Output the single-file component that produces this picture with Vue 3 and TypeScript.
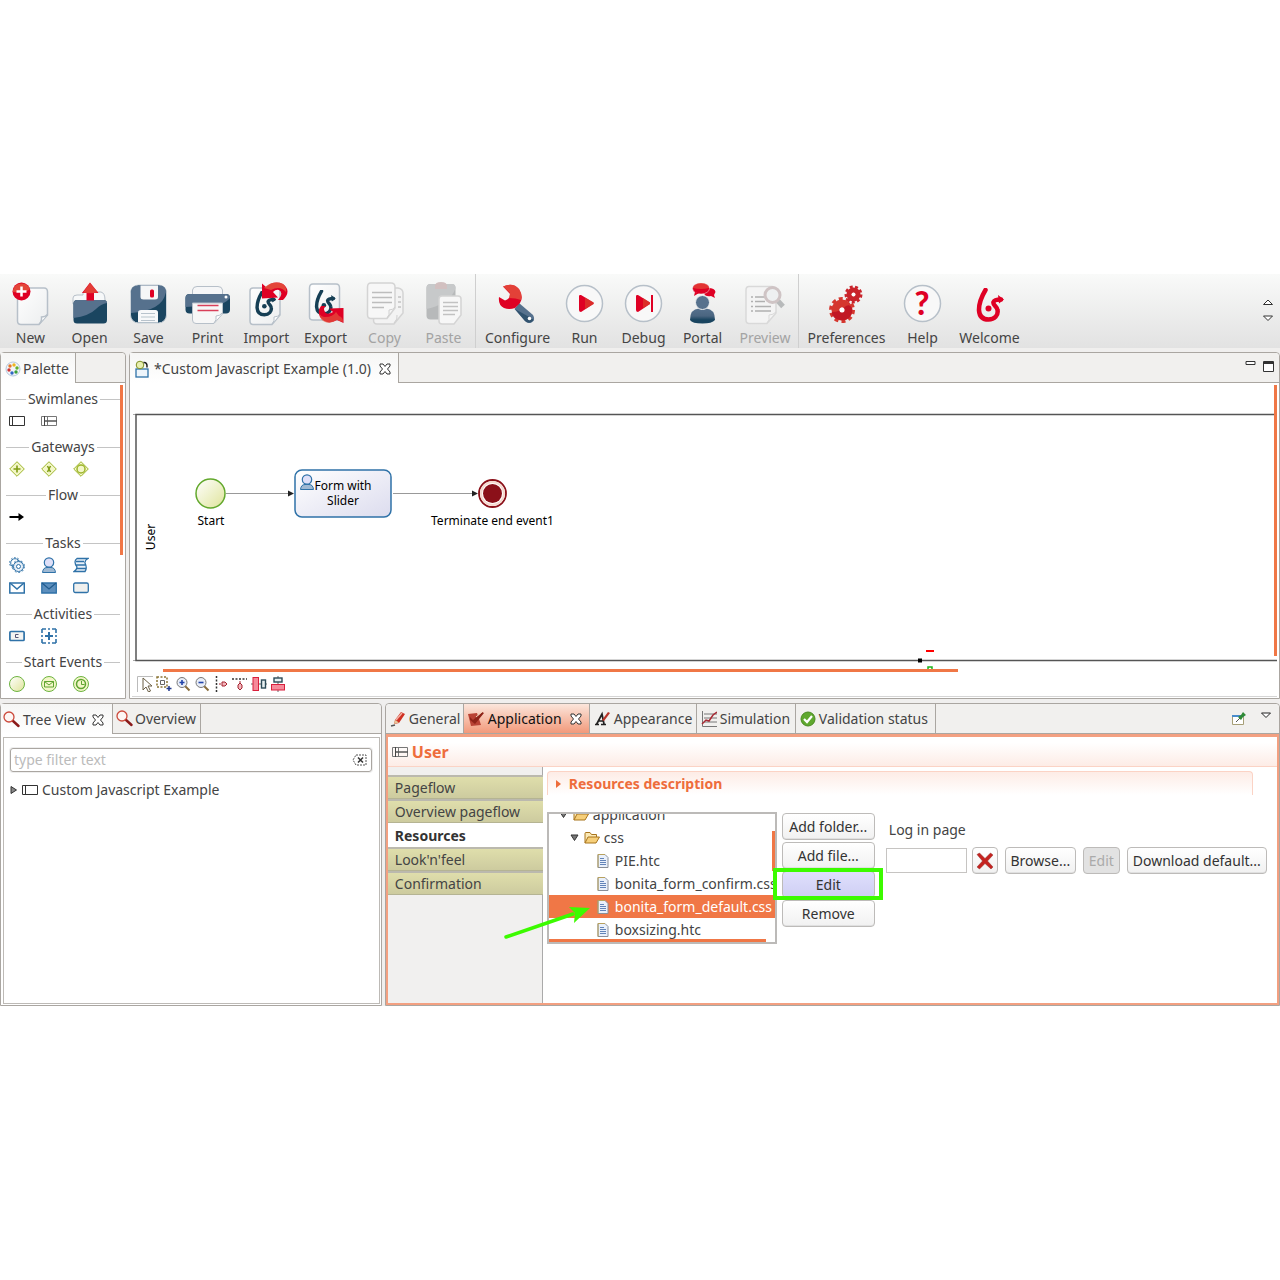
<script setup lang="ts">
import { ref } from 'vue'

interface Tool { id: string; label: string; size?: string; disabled?: boolean }
interface Category { title: string; rows: string[][] }
interface FileRow { name: string; kind: 'folder' | 'file'; level: number }

const toolGroups: Tool[][] = [
  [
    { id: 'new', label: 'New' },
    { id: 'open', label: 'Open' },
    { id: 'save', label: 'Save' },
    { id: 'print', label: 'Print' },
    { id: 'import', label: 'Import' },
    { id: 'export', label: 'Export' },
    { id: 'copy', label: 'Copy', disabled: true },
    { id: 'paste', label: 'Paste', disabled: true },
  ],
  [
    { id: 'configure', label: 'Configure', size: 'wide' },
    { id: 'run', label: 'Run' },
    { id: 'debug', label: 'Debug' },
    { id: 'portal', label: 'Portal' },
    { id: 'preview', label: 'Preview', size: 'medium', disabled: true },
  ],
  [
    { id: 'preferences', label: 'Preferences', size: 'widest' },
    { id: 'help', label: 'Help' },
    { id: 'welcome', label: 'Welcome', size: 'wide' },
  ],
]

const categories: Category[] = [
  { title: 'Swimlanes', rows: [['pool', 'lane']] },
  { title: 'Gateways', rows: [['gate-and', 'gate-xor', 'gate-or']] },
  { title: 'Flow', rows: [['flow']] },
  { title: 'Tasks', rows: [['service', 'human', 'script'], ['receive', 'send', 'abstract']] },
  { title: 'Activities', rows: [['call', 'subprocess']] },
  { title: 'Start Events', rows: [['start', 'start-msg', 'start-timer']] },
]

const canvasTools = ['cursor', 'marquee', 'zoom-in', 'zoom-out', 'space-h', 'space-v', 'align-h', 'align-v']

const pages = ['Pageflow', 'Overview pageflow', 'Resources', "Look'n'feel", 'Confirmation']
const activePage = ref('Resources')

const files: FileRow[] = [
  { name: 'application', kind: 'folder', level: 0 },
  { name: 'css', kind: 'folder', level: 1 },
  { name: 'PIE.htc', kind: 'file', level: 2 },
  { name: 'bonita_form_confirm.css', kind: 'file', level: 2 },
  { name: 'bonita_form_default.css', kind: 'file', level: 2 },
  { name: 'boxsizing.htc', kind: 'file', level: 2 },
]
const selectedFile = ref('bonita_form_default.css')

const filter = ref('')
const loginPage = ref('')
</script>

<template>
  <svg class="sprite" aria-hidden="true">
    <defs>
      <linearGradient id="g-paper" x1="0" y1="0" x2="1" y2="1">
        <stop offset="0" stop-color="#ffffff" /><stop offset="1" stop-color="#eceeef" />
      </linearGradient>
      <linearGradient id="g-navy" x1="0" y1="0" x2="0" y2="1">
        <stop offset="0" stop-color="#56718d" /><stop offset="0.5" stop-color="#4a6580" /><stop offset="0.75" stop-color="#1a4560" />
      </linearGradient>
      <linearGradient id="g-green" x1="0" y1="0" x2="1" y2="1">
        <stop offset="0" stop-color="#ffffff" /><stop offset="1" stop-color="#dfe49a" />
      </linearGradient>
      <linearGradient id="g-task" x1="0" y1="0" x2="1" y2="1">
        <stop offset="0" stop-color="#ffffff" /><stop offset="1" stop-color="#dcdcee" />
      </linearGradient>

      <symbol id="swirl" viewBox="0 0 28 34">
        <path d="M9.500 1.500C5 9 2.800 16 3 22C3.500 28.500 7 31 12.500 31C18.500 31 22.500 27 21.500 21.500C21 18 16.500 16.500 17.500 13.500C18.500 11 22 11 25 11" fill="none" stroke="currentColor" stroke-width="4.500" stroke-linecap="round" />
        <path d="M22 6.500l6 4.500-5 4z" fill="currentColor" /><circle cx="12.500" cy="20" r="3" fill="currentColor" />
      </symbol>

      <symbol id="t-new" viewBox="0 0 48 48">
        <path d="M15 8H38Q41.500 8 41.500 12V35L33 44.500H15Q11.500 44.500 11.500 41V12Q11.500 8 15 8Z" fill="url(#g-paper)" stroke="#b7c0c9" stroke-width="1.500" />
        <path d="M33 44q3-2 2.500-7q4 0 6-2.500" fill="#fff" stroke="#b7c0c9" stroke-width="1.500" />
        <circle cx="15.500" cy="11.500" r="9" fill="#df0024" /><path d="M7 10a9 9 0 0 1 17-1q-4 4-17 3z" fill="#e4573f" opacity=".8" />
        <path d="M10.500 11.500h10M15.500 6.500v10" stroke="#fff" stroke-width="2.500" />
      </symbol>
      <symbol id="t-open" viewBox="0 0 48 48">
        <path d="M8 24V18Q8 15 12 15H18V12H36Q40 13 40 20V24Z" fill="#f6f8f9" stroke="#b7c0c9" />
        <rect x="8.500" y="20" width="33.500" height="23.500" rx="3.500" fill="#1a4560" />
        <path d="M8.500 38V23.500Q8.500 20 12 20H38.500Q42 20 42 23Q36 24 31 29Q24 36 8.500 38Z" fill="#56718d" />
        <path d="M25 2.500L33.500 13H29V20.500H21.500V13H17Z" fill="#df0024" /><path d="M25 3L33 12.500Q25 14 18 12.500Z" fill="#e4573f" opacity=".7" />
      </symbol>
      <symbol id="t-save" viewBox="0 0 48 48">
        <rect x="6.500" y="5" width="36" height="38" rx="8" fill="#1a4560" stroke="#c9d1d8" />
        <path d="M7 33V12Q7 5.500 14 5.500H36Q42 6 42 12Q40 22 31 27Q22 32 7 33Z" fill="#56718d" />
        <path d="M16.500 5.500H34V17Q34 19.500 31 19.500H19.500Q16.500 19.500 16.500 17Z" fill="#f5f6f7" /><rect x="26" y="9.500" width="4" height="8" rx="1.500" fill="#df0024" />
        <path d="M14 42.500V32.500Q14 30 17 30H31.500Q34 30 34 32.500V42.500Z" fill="#f7f8f9" /><path d="M17 33.500h14M17 37h14M17 40.500h14" stroke="#b8c3cc" stroke-width="1.200" />
      </symbol>
      <symbol id="t-print" viewBox="0 0 48 48">
        <path d="M9.500 17V10Q10 6.500 14 6.500H35Q39 6.500 39.500 10V17Z" fill="#f5f6f7" stroke="#b7c0c9" />
        <rect x="2.500" y="14" width="44.500" height="19.500" rx="4" fill="#1a4560" /><path d="M2.500 27V18Q2.500 14 7 14H43Q47 14 47 18Q42 24 33 25Z" fill="#56718d" />
        <circle cx="43" cy="17" r="1.500" fill="#fff" />
        <path d="M9.500 23H39.500V34L31 43.500H13Q9.500 43.500 9.500 40Z" fill="#f7f7f7" stroke="#b7c0c9" /><path d="M31 43q3-3 2-7q4 0 6-3" fill="#fff" stroke="#b7c0c9" />
        <path d="M14.500 25.500h21M14.500 30.500h21" stroke="#d9405a" stroke-width="1.500" />
      </symbol>
      <symbol id="t-import" viewBox="0 0 48 48">
        <path d="M11 8H35Q38 8 38 11V35L30 44.500H11Q8 44.500 8 41V11Q8 8 11 8Z" fill="url(#g-paper)" stroke="#b7c0c9" stroke-width="1.500" />
        <path d="M30 44q3-3 2-7q4 0 6-3" fill="#fff" stroke="#b7c0c9" /><use href="#swirl" x="12" y="11" width="23" height="26" color="#163f55" />
        <path d="M20 3.500L24 7Q32 0 41 4Q50 11 41 20H36Q42 13 37 10Q34 9 31 12L36 17.500L20 18.500Z" fill="#df0024" /><path d="M23 7Q32 0 41 4Q45 7 44 12Q38 5 29 10L22 8Z" fill="#e4573f" opacity=".8" />
      </symbol>
      <symbol id="t-export" viewBox="0 0 48 48">
        <path d="M12 4H35Q38.500 4 38.500 8V40H12Q8.500 40 8.500 37V8Q8.500 4 12 4Z" fill="url(#g-paper)" stroke="#b7c0c9" stroke-width="1.500" />
        <use href="#swirl" x="13" y="10" width="22" height="26" color="#163f55" />
        <path d="M20 26Q16 31 19 37Q26 46 36 40L42.500 43V28L28 28.500L32 32Q25 36 23.500 31Q22 28 25 26Z" fill="#df0024" /><path d="M18 33Q20 37 24 37Q32 37 35 32L38 36Q42 37 42 42L36 40Q26 46 20 39Z" fill="#e4573f" opacity=".65" />
      </symbol>
      <symbol id="t-copy" viewBox="0 0 48 48">
        <path d="M17 8H38Q43 9 43 13V33L34 44H17Q13.500 44 13.500 40Z" fill="#f3f3f3" stroke="#d4d4d4" stroke-width="1.500" /><path d="M38 17h3M38 22h3M38 27h3" stroke="#aaa" />
        <path d="M11 3H31Q35 3 35 7V28L27 38.500H11Q7.500 38.500 7.500 35V7Q7.500 3 11 3Z" fill="#f7f7f7" stroke="#d4d4d4" stroke-width="1.500" />
        <path d="M27 38q3-3 2-8q4 0 6-3M34 43q4-4 3-8" fill="none" stroke="#d0d0d0" /><path d="M12 12.500h20M12 17.500h20M12 22.500h20M12 27.500h12" stroke="#bdbdbd" stroke-width="1.500" />
      </symbol>
      <symbol id="t-paste" viewBox="0 0 48 48">
        <rect x="7.500" y="4" width="29" height="35.500" rx="4" fill="#b7b9ba" /><path d="M7.500 29V8Q7.500 4 12 4H33Q36.500 4 36.500 8Q34 17 25 22Q18 27 7.500 29Z" fill="#c7c9ca" />
        <path d="M16 9V6Q16 2 22 2Q28 2 28 6V9Z" fill="#d2c0c0" />
        <path d="M23 16H39Q42 16 42 19V35L35 44H23Q20 44 20 41V19Q20 16 23 16Z" fill="#f7f7f7" stroke="#d4d4d4" stroke-width="1.500" /><path d="M24 22.500h15M24 26.500h15M24 30.500h15M24 34.500h12" stroke="#c2c2c2" stroke-width="1.500" />
      </symbol>
      <symbol id="t-configure" viewBox="0 0 48 48">
        <path d="M26 23L40 35Q43 40 38.500 42.500Q35 44 32 41L21.500 29Z" fill="#56718d" /><path d="M22 29L38 38L41 40Q36 45 32 41Z" fill="#31536f" />
        <circle cx="36.500" cy="38.500" r="1.800" fill="#fff" />
        <path d="M10 6.500Q20 2 26 9Q31 17 27 23L22 28Q16 30 11 28Q5 25 6 17L12 20.500Q17 19 17 14Z" fill="#df0024" /><path d="M10 6.500Q20 2 26 9Q30 15 28 20Q23 18 16 18Q17 15 17 13Z" fill="#e4573f" opacity=".75" />
      </symbol>
      <symbol id="t-run" viewBox="0 0 48 48">
        <circle cx="24.500" cy="23.500" r="18" fill="#f8f8f8" stroke="#b7c0c9" stroke-width="1.500" />
        <path d="M19 16Q19 14.500 21 15L33.500 22.500Q34 23.500 33.500 24L21 32Q19 32 19 30Z" fill="#df0024" /><path d="M25 17.500L33.500 22.500V24L25 29Z" fill="#d9402c" opacity=".7" />
      </symbol>
      <symbol id="t-debug" viewBox="0 0 48 48">
        <circle cx="24.500" cy="23.500" r="18" fill="#f8f8f8" stroke="#b7c0c9" stroke-width="1.500" />
        <path d="M17 16Q17 14.500 19 15L31 22.500V24L19 32Q17 32 17 30Z" fill="#df0024" /><path d="M24 18L31 22.500V24L24 28Z" fill="#d9402c" opacity=".7" /><path d="M33 15v17" stroke="#df0024" stroke-width="2" />
      </symbol>
      <symbol id="t-portal" viewBox="0 0 48 48">
        <path d="M12 40Q12 29 21 28.500H28Q37 29 37 40Q34 43.500 24.500 43.500Q14 43.500 12 40Z" fill="url(#g-navy)" /><circle cx="24.500" cy="22.500" r="7" fill="#56718d" stroke="#eef0f1" />
        <path d="M30 8Q37 8 37.500 12L36 15L37 18L33 16Q27 17 26 13Z" fill="#df0024" />
        <ellipse cx="23" cy="8.500" rx="8.500" ry="5.500" fill="#df0024" stroke="#f1f2f2" stroke-width=".500" /><path d="M17 12l-1 4l5-3z" fill="#df0024" /><path d="M15 8Q17 3 23 3Q30 3 31 8Q23 10 15 8Z" fill="#e4573f" opacity=".6" />
      </symbol>
      <symbol id="t-preview" viewBox="0 0 48 48">
        <path d="M9 6.500H32Q36 7 36 10V33L27 43.500H9Q6 43.500 6 40V10Q6 6.500 9 6.500Z" fill="#f4f4f4" stroke="#d9d9d9" stroke-width="1.500" /><path d="M27 43q3-3 2-8q4 0 7-3" fill="none" stroke="#d9d9d9" />
        <path d="M11 17h2M11 21.500h2M11 26.500h2M11 31h2M15 17h9M15 21.500h10M15 26.500h16M15 31h16" stroke="#b0b0b0" stroke-width="1.500" />
        <path d="M38 21L43 26.500" stroke="#b8babb" stroke-width="5" /><circle cx="32.500" cy="15" r="7.500" fill="#eef0f1" stroke="#cfc4c5" stroke-width="3" />
      </symbol>
      <symbol id="t-preferences" viewBox="0 0 48 48">
        <g fill="none" stroke="#d5372f"><circle cx="20" cy="30" r="6.500" stroke-width="8" /><circle cx="20" cy="30" r="11.500" stroke-width="3" stroke-dasharray="4 3.225" /></g>
        <path d="M10 32Q18 32 24 26Q28 24 30 28Q31 33 28 37Q24 41 18 40Q11 39 10 34Z" fill="#b90d22" opacity=".75" /><circle cx="20" cy="30" r="2.500" fill="#fff" />
        <g fill="none" stroke="#c9232b"><circle cx="31.500" cy="14.500" r="4.500" stroke-width="5" /><circle cx="31.500" cy="14.500" r="7.700" stroke-width="2.500" stroke-dasharray="3 2.375" /></g><circle cx="31.500" cy="14.500" r="1.800" fill="#fff" />
      </symbol>
      <symbol id="t-help" viewBox="0 0 48 48">
        <circle cx="24.500" cy="23.500" r="18" fill="#f8f8f8" stroke="#b7c0c9" stroke-width="1.500" />
        <text x="24" y="35" text-anchor="middle" font-family="Lato, 'Open Sans', sans-serif" font-weight="900" font-size="32" fill="#df0024">?</text>
      </symbol>
      <symbol id="t-welcome" viewBox="0 0 48 48"><use href="#swirl" x="11" y="8" width="28" height="35" color="#df0024" /></symbol>

      <symbol id="p-pool" viewBox="0 0 16 16"><path d="M.500 3.500h15v9h-15zM3.500 3.500v9" fill="none" stroke="#333" /></symbol>
      <symbol id="p-lane" viewBox="0 0 16 16"><path d="M.500 3.500h15v9h-15zM3.500 3v10M6.500 3v10M4 8h12" fill="none" stroke="#777" /><path d="M3.500 3v10M4 8h12" stroke="#444" /></symbol>
      <symbol id="p-gate-and" viewBox="0 0 16 16"><path d="M8 .700L15.300 8L8 15.300L.700 8Z" fill="#f3f6c8" stroke="#9db52b" /><path d="M8 4.500v7M4.500 8h7" stroke="#7f9c14" stroke-width="1.600" /></symbol>
      <symbol id="p-gate-xor" viewBox="0 0 16 16"><path d="M8 .700L15.300 8L8 15.300L.700 8Z" fill="#f3f6c8" stroke="#9db52b" /><path d="M6.500 5l3 6M9.500 5l-3 6" stroke="#7f9c14" stroke-width="1.500" /></symbol>
      <symbol id="p-gate-or" viewBox="0 0 16 16"><path d="M8 .700L15.300 8L8 15.300L.700 8Z" fill="#f3f6c8" stroke="#9db52b" /><circle cx="8" cy="8" r="4" fill="none" stroke="#9db52b" stroke-width="1.500" /></symbol>
      <symbol id="p-flow" viewBox="0 0 16 16"><path d="M.500 8h11" stroke="#000" stroke-width="2" /><path d="M9.500 4L15 8L9.500 12Z" fill="#000" /></symbol>
      <symbol id="p-service" viewBox="0 0 16 16"><g fill="none" stroke="#2f72a8"><circle cx="6" cy="6" r="4.300" /><circle cx="6" cy="6" r="5.400" stroke-dasharray="1.700 1.700" /></g><circle cx="9.500" cy="9.500" r="5" fill="#e6eef7" stroke="#2f72a8" /><circle cx="9.500" cy="9.500" r="6" fill="none" stroke="#2f72a8" stroke-dasharray="1.900 1.870" /><circle cx="9.500" cy="9.500" r="2" fill="#fff" stroke="#2f72a8" /></symbol>
      <symbol id="p-human" viewBox="0 0 16 16"><path d="M1.500 15.500Q2 10.500 6 10.500h4Q14 10.500 14.500 15.500Z" fill="#9fb9d3" stroke="#2f72a8" /><circle cx="8" cy="5.500" r="4.700" fill="#dfe0f8" stroke="#2f72a8" stroke-width="1.200" /></symbol>
      <symbol id="p-script" viewBox="0 0 16 16"><path d="M4 1.500H15Q11.500 3.500 12 6Q14.500 11 12 14.500H1Q4 12.500 4 10Q0 4 4 1.500ZM3 4.500h8M3.500 8h9M4 11.500h9" fill="#eaf1f8" stroke="#2f72a8" stroke-width="1.300" /></symbol>
      <symbol id="p-receive" viewBox="0 0 16 16"><path d="M.800 3h14.500v10H.800z" fill="#fff" stroke="#2f72a8" stroke-width="1.500" /><path d="M1 3l7 6l7-6" fill="none" stroke="#2f72a8" stroke-width="1.500" /></symbol>
      <symbol id="p-send" viewBox="0 0 16 16"><path d="M.800 3h14.500v10H.800z" fill="#5d8fbd" stroke="#2f72a8" stroke-width="1.300" /><path d="M1 3l7 6l7-6" fill="none" stroke="#225c8e" stroke-width="1.300" /></symbol>
      <symbol id="p-abstract" viewBox="0 0 16 16"><rect x=".700" y="3" width="14.600" height="9.500" rx="1.500" fill="#f0f0ee" stroke="#2f72a8" stroke-width="1.300" /></symbol>
      <symbol id="p-call" viewBox="0 0 16 16"><rect x=".900" y="3.500" width="14.200" height="9" rx="1" fill="#f4f4f2" stroke="#2f72a8" stroke-width="1.700" /><path d="M9.500 6.500h-3v3h3" fill="none" stroke="#557" /></symbol>
      <symbol id="p-subprocess" viewBox="0 0 16 16"><rect x="1" y="1" width="14" height="14" fill="none" stroke="#2f72a8" stroke-width="1.600" stroke-dasharray="4 2 2 2 4 0" /><path d="M8 4v8M4 8h8" stroke="#2f72a8" stroke-width="2" /></symbol>
      <symbol id="p-start" viewBox="0 0 16 16"><circle cx="8" cy="8" r="7.500" fill="url(#g-green)" stroke="#6cb33f" /></symbol>
      <symbol id="p-start-msg" viewBox="0 0 16 16"><circle cx="8" cy="8" r="7.500" fill="#f3f6c8" stroke="#6cb33f" /><path d="M3.500 5.500h9v5.500h-9zl4.500 3.500l4.500-3.500" fill="none" stroke="#5fa531" /></symbol>
      <symbol id="p-start-timer" viewBox="0 0 16 16"><circle cx="8" cy="8" r="7.500" fill="#f3f6c8" stroke="#6cb33f" /><circle cx="8" cy="8" r="4.500" fill="none" stroke="#5fa531" stroke-width="1.500" /><path d="M8.500 5v3.500h3" fill="none" stroke="#5fa531" /></symbol>

      <symbol id="c-cursor" viewBox="0 0 16 16"><path d="M.500 16V.500H16" fill="none" stroke="#bbb" /><path d="M6 2v12l3-3l2.500 5l2-1l-2.500-5h4Z" fill="#fff" stroke="#6b5f45" /></symbol>
      <symbol id="c-marquee" viewBox="0 0 16 16"><path d="M1 1h10v10H1z" fill="none" stroke="#8a7434" stroke-width="1.500" stroke-dasharray="2 1.500" /><path d="M4.500 4.500h4v4h-4z" fill="none" stroke="#666" /><path d="M13 10v5M10.500 12.500h5" stroke="#223a8c" stroke-width="1.500" /></symbol>
      <symbol id="c-zoom-in" viewBox="0 0 16 16"><path d="M10 10l4.500 4.500" stroke="#8a6d3b" stroke-width="2" /><circle cx="7" cy="6.500" r="5" fill="#e9eef8" stroke="#777" /><path d="M7 4v5M4.500 6.500h5" stroke="#2244aa" stroke-width="1.600" /></symbol>
      <symbol id="c-zoom-out" viewBox="0 0 16 16"><path d="M10 10l4.500 4.500" stroke="#8a6d3b" stroke-width="2" /><circle cx="7" cy="6.500" r="5" fill="#e9eef8" stroke="#777" /><path d="M4.500 6.500h5" stroke="#2244aa" stroke-width="1.600" /></symbol>
      <symbol id="c-space-h" viewBox="0 0 16 16"><path d="M3.500 0v16" stroke="#333" stroke-dasharray="2 1.500" stroke-width="1.500" /><path d="M6 8h2M9 6h3l2 2l-2 2h-3z" fill="#f3b6bd" stroke="#a3222f" /></symbol>
      <symbol id="c-space-v" viewBox="0 0 16 16"><path d="M0 3h15" stroke="#333" stroke-dasharray="2 1.500" stroke-width="1.500" /><path d="M8 5v2M6 9l2-2l2 2v3l-2 2l-2-2z" fill="#f3b6bd" stroke="#a3222f" /></symbol>
      <symbol id="c-align-h" viewBox="0 0 16 16"><path d="M0 8h16" stroke="#666" /><rect x="2" y="1.500" width="5.500" height="13" fill="#f58a9a" stroke="#d91f3c" /><rect x="10.500" y="4" width="4" height="8" fill="#e8f0f2" stroke="#2b4a58" stroke-width="1.400" /></symbol>
      <symbol id="c-align-v" viewBox="0 0 16 16"><path d="M8 0v16" stroke="#666" /><rect x="1.500" y="8.500" width="13" height="5.500" fill="#f58a9a" stroke="#d91f3c" /><rect x="4" y="2" width="8" height="4" fill="#e8f0f2" stroke="#2b4a58" stroke-width="1.400" /></symbol>

      <symbol id="close" viewBox="0 0 12 12"><path d="M1 1h3l2 2.500L8 1h3v2L8.500 6L11 9v2H8L6 8.500L4 11H1V9l2.500-3L1 3z" fill="#fff" stroke="#333" /></symbol>
      <symbol id="lens" viewBox="0 0 18 18"><path d="M9.500 9.500l6 5.500" stroke="#8b1a1a" stroke-width="2.500" stroke-linecap="round" /><circle cx="6" cy="6" r="5" fill="#fdf6f4" stroke="#cc4a3c" stroke-width="1.300" /></symbol>
      <symbol id="folder" viewBox="0 0 16 16"><path d="M1 13V3.500Q1 2.500 2 2.500h4l1.500 2h5v3" fill="#fbe9b5" stroke="#a8741c" /><path d="M1 13L4 7h11.500L12 13Z" fill="#f6cf7a" stroke="#a8741c" /></symbol>
      <symbol id="file" viewBox="0 0 16 16"><path d="M3 1.500h7l3 3v10H3z" fill="#e9f0fb" stroke="#8a8f98" /><path d="M3 14.500V1.500h7" fill="none" stroke="#b8a15e" /><path d="M5 5.500h4M5 7.500h6M5 9.500h6M5 11.500h6" stroke="#6384b8" /></symbol>
    </defs>
  </svg>

  <main class="studio">
    <nav class="toolbar" aria-label="Main toolbar">
      <div v-for="(group, i) in toolGroups" :key="i" class="tool-group">
        <button v-for="tool in group" :key="tool.id" type="button" class="tool" :class="tool.size" :disabled="tool.disabled">
          <svg class="tool-icon"><use :href="'#t-' + tool.id" /></svg>
          <span>{{ tool.label }}</span>
        </button>
      </div>
      <svg class="more" viewBox="0 0 12 24" width="12" height="24"><path d="M1.500 6.500h9L6 2zM1.500 18h9L6 22.500z" fill="#fff" stroke="#333" /></svg>
    </nav>

    <div class="row">
      <section class="panel palette">
        <header class="tabs">
          <button type="button" class="tab active tab-palette">
            <svg width="16" height="16" viewBox="0 0 16 16"><circle cx="8" cy="8" r="7" fill="#f2f5f9" stroke="#b4c6dc" /><circle cx="5" cy="5" r="1.700" fill="#e3772b" /><circle cx="9" cy="4" r="1.700" fill="#f0b61f" /><circle cx="12" cy="7" r="1.700" fill="#62b02c" /><circle cx="11" cy="11" r="1.700" fill="#3a9e3a" /><circle cx="7" cy="12" r="1.700" fill="#2f66c4" /><circle cx="4" cy="9" r="1.700" fill="#cf3535" /></svg>
            Palette
          </button>
        </header>
        <div class="palette-body">
          <div v-for="cat in categories" :key="cat.title" class="category">
            <h3><span>{{ cat.title }}</span></h3>
            <div v-for="(row, r) in cat.rows" :key="r" class="palette-row">
              <svg v-for="icon in row" :key="icon" width="16" height="16"><use :href="'#p-' + icon" /></svg>
            </div>
          </div>
          <i class="bar palette-bar"></i>
        </div>
      </section>

      <section class="panel editor">
        <header class="tabs">
          <button type="button" class="tab active tab-editor">
            <svg width="16" height="18" viewBox="0 0 16 18"><rect x="2" y="9" width="12" height="8" fill="#eef5fb" stroke="#2f72a8" stroke-width="1.300" /><circle cx="6" cy="5" r="3.800" fill="#e9efb0" stroke="#7e8f22" /><path d="M9.500 2.500q4-.5 3.500 5" fill="none" stroke="#222" stroke-width="1.500" /></svg>
            *Custom Javascript Example (1.0)
            <svg class="close" width="12" height="12"><use href="#close" /></svg>
          </button>
          <span class="window-tools">
            <svg width="30" height="14" viewBox="0 0 30 14"><path d="M1 2.500h9v3H1zM18.500 2.500h10v10h-10z" fill="#fff" stroke="#333" /><path d="M18.500 4h10" stroke="#333" stroke-width="2" /></svg>
          </span>
        </header>
        <div class="canvas">
          <svg class="diagram" width="100%" height="290">
            <path d="M3 31.500h4M3 277.500h4" stroke="#aaa" />
            <rect x="6" y="31.500" width="4000" height="246" fill="#fff" stroke="#555" stroke-width="1.500" />
            <text transform="translate(25 154) rotate(-90)" text-anchor="middle">User</text>
            <g stroke="#999"><path d="M96 110.500h64M263 110.500h81" /></g>
            <path d="M158 107.500l6 3l-6 3zM342 107.500l6 3l-6 3z" fill="#222" />
            <circle cx="80.500" cy="110.500" r="14.500" fill="url(#g-green)" stroke="#62a82c" stroke-width="1.500" />
            <text x="81" y="142" text-anchor="middle">Start</text>
            <rect x="165" y="87" width="96" height="47" rx="7" fill="url(#g-task)" stroke="#2f72a8" stroke-width="1.500" />
            <use href="#p-human" x="169" y="91" width="16" height="16" />
            <text x="213" y="107" text-anchor="middle">Form with</text>
            <text x="213" y="122" text-anchor="middle">Slider</text>
            <circle cx="362.500" cy="110.500" r="13.500" fill="#fff" stroke="#8b1019" stroke-width="1.800" />
            <circle cx="362.500" cy="110.500" r="11.500" fill="none" stroke="#f6d9cf" stroke-width="2" />
            <circle cx="362.500" cy="110.500" r="9.500" fill="#8b1019" />
            <text x="362.500" y="142" text-anchor="middle">Terminate end event1</text>
            <rect x="788" y="275.500" width="4" height="4" /><path d="M796 268h8" stroke="#f00" stroke-width="2" />
            <path d="M798 286v-2h4v2" fill="none" stroke="#1bb51b" stroke-width="1.500" />
            <rect x="33" y="286" width="795" height="3" fill="#f07746" />
          </svg>
          <i class="bar canvas-bar"></i>
        </div>
        <div class="canvas-tools">
          <svg v-for="t in canvasTools" :key="t" width="16" height="16"><use :href="'#c-' + t" /></svg>
        </div>
      </section>
    </div>

    <div class="row">
      <section class="panel tree">
        <header class="tabs">
          <button type="button" class="tab active tab-tree">
            <svg width="18" height="18"><use href="#lens" /></svg>Tree View
            <svg class="close" width="12" height="12"><use href="#close" /></svg>
          </button>
          <button type="button" class="tab tab-overview"><svg width="18" height="18"><use href="#lens" /></svg>Overview</button>
        </header>
        <div class="tree-body">
          <div class="filter">
            <input v-model="filter" type="text" placeholder="type filter text" aria-label="Filter" />
            <svg width="15" height="12" viewBox="0 0 15 12"><path d="M4 1h10v10H4L1 6z" fill="#fff" stroke="#555" stroke-dasharray="2 1" /><path d="M6 3.500l5 5M11 3.500l-5 5" stroke="#333" stroke-width="1.500" /></svg>
          </div>
          <div class="tree-root">
            <svg width="8" height="10" viewBox="0 0 8 10"><path d="M1 1.500L6.500 5L1 8.500Z" fill="#888" stroke="#333" /></svg>
            <svg width="16" height="16"><use href="#p-pool" /></svg>
            <span>Custom Javascript Example</span>
          </div>
        </div>
      </section>

      <section class="panel props">
        <header class="tabs">
          <button type="button" class="tab tab-general">
            <svg width="16" height="16" viewBox="0 0 16 16"><path d="M1 15l4-1" stroke="#555" stroke-width="1.500" /><path d="M4 13L5 9L11 1L15 3L9 12Z" fill="#cf2f22" /><path d="M6 9l6-7" stroke="#f3b2a5" stroke-width="1.500" /><path d="M4 13l1-4l4 2.500z" fill="#e6c89a" /></svg>General
          </button>
          <button type="button" class="tab tab-application">
            <svg width="16" height="16" viewBox="0 0 16 16"><path d="M0 3l9-1l4 12l-10 1z" fill="#b94234" /><path d="M2 6l3 3l9-8l2 1l-9 11l-5-4z" fill="#8f2318" /><path d="M8 6l6-5" stroke="#f1d5bd" /></svg>Application
            <svg class="close" width="12" height="12"><use href="#close" /></svg>
          </button>
          <button type="button" class="tab tab-appearance">
            <svg width="16" height="16" viewBox="0 0 16 16"><path d="M1 13.500h4M7 13.500h5M2.500 13.500L8 3L10 13M5 10h5" fill="none" stroke="#222" stroke-width="1.700" /><path d="M8 9L14 1l2 1l-6 8z" fill="#b83328" /></svg>Appearance
          </button>
          <button type="button" class="tab tab-simulation">
            <svg width="16" height="16" viewBox="0 0 16 16"><path d="M1.500 0v15.500H16M3 3h13M3 7h13M3 11h13" fill="none" stroke="#777" /><path d="M1 13l4-4l3 1l4-6l4-3" fill="none" stroke="#a82b35" stroke-width="1.500" /></svg>Simulation
          </button>
          <button type="button" class="tab tab-validation">
            <svg width="16" height="16" viewBox="0 0 16 16"><circle cx="8" cy="8" r="7" fill="#5fa82e" stroke="#4a8a22" /><path d="M4 8l3 3l5-6" fill="none" stroke="#fff" stroke-width="2.200" /></svg>Validation status
          </button>
          <span class="window-tools">
            <svg width="44" height="18" viewBox="0 0 44 18"><path d="M1.500 5.500h11v9h-11z" fill="#fff" stroke="#a79f77" /><path d="M1 6h12" stroke="#4a8ccc" stroke-width="2" /><path d="M5 12l4-4" stroke="#555" /><path d="M7 7l3-2l2-3l3 3l-3 2l-2 3z" fill="#2f8a35" /><path d="M30.500 3h9L35 7.500z" fill="#fff" stroke="#222" /></svg>
          </span>
        </header>
        <div class="props-frame">
          <h2><svg width="16" height="16"><use href="#p-lane" /></svg>User</h2>
          <div class="props-body">
            <nav class="pages">
              <button v-for="page in pages" :key="page" type="button" class="page" :class="{ current: page === activePage }" @click="activePage = page">{{ page }}</button>
            </nav>
            <div class="resources">
              <h4><svg width="6" height="8" viewBox="0 0 6 8"><path d="M0 0L5 4L0 8Z" fill="#ee6d3c" /></svg>Resources description</h4>
              <div class="resource-row">
                <div class="file-box">
                  <ul>
                    <li v-for="file in files" :key="file.name" :class="['level-' + file.level, { selected: file.name === selectedFile }]" @click="selectedFile = file.name">
                      <svg v-if="file.kind === 'folder'" width="10" height="8" viewBox="0 0 10 8"><path d="M1 1h7L4.500 6.500Z" fill="#777" stroke="#333" /></svg>
                      <svg width="16" height="16"><use :href="'#' + file.kind" /></svg>
                      <span>{{ file.name }}</span>
                    </li>
                  </ul>
                  <i class="bar file-vbar"></i><i class="bar file-hbar"></i>
                </div>
                <div class="file-actions">
                  <button type="button" class="btn">Add folder...</button>
                  <button type="button" class="btn">Add file...</button>
                  <button type="button" class="btn marked">Edit</button>
                  <button type="button" class="btn">Remove</button>
                </div>
                <div class="login">
                  <label for="login-page">Log in page</label>
                  <div class="login-row">
                    <input id="login-page" v-model="loginPage" type="text" />
                    <button type="button" class="btn clear" aria-label="Clear">
                      <svg width="18" height="18" viewBox="0 0 18 18"><path d="M1 2.500l2.500-1.500L9 6.500L14.500 1L17 3L11.500 9L17 15L15 17L9 11.500L3.500 17L1 15L6.500 9Z" fill="#c5221f" stroke="#93302d" stroke-width=".500" /></svg>
                    </button>
                    <button type="button" class="btn browse">Browse...</button>
                    <button type="button" class="btn small" disabled>Edit</button>
                    <button type="button" class="btn download">Download default...</button>
                  </div>
                </div>
                <svg class="pointer" width="90" height="40" viewBox="0 0 90 40"><path d="M3 36L70 13" stroke="#3cfb00" stroke-width="3.500" stroke-linecap="round" /><path d="M87 7L66 6L72 12L71 22Z" fill="#3cfb00" /></svg>
              </div>
            </div>
          </div>
        </div>
      </section>
    </div>
  </main>
</template>

<style>
body { margin: 0; background: #fff; }
</style>

<style scoped>
.sprite { position: absolute; width: 0; height: 0; }
.studio, .studio button, .studio input { font-family: "Noto Sans", "Open Sans", sans-serif; font-size: 14px; line-height: 20px; color: #444; }
.studio { padding: 274px 0; }
button { box-sizing: border-box; padding: 0; border: 0; background: none; white-space: nowrap; }
svg { flex: none; display: block; }
h2, h3, h4, ul { margin: 0; padding: 0; list-style: none; }
.toolbar { display: flex; height: 74px; margin-bottom: 4px; background: linear-gradient(#f9faf9, #e2e2e2); padding-left: 1px; box-shadow: 0 4px #f0efee; }
.tool-group { display: flex; padding-right: 2px; margin-right: 4px; border-right: 1px solid #cfcfcf; }
.tool-group:nth-child(2) { padding-right: 0; margin-right: 1px; }
.tool-group:nth-child(3) { border: 0; }
.tool { display: flex; flex-direction: column; align-items: center; width: 59px; padding-top: 6px; }
.tool.medium { width: 66px; }
.tool.wide { width: 75px; }
.tool.widest { width: 93px; }
.tool-icon { width: 48px; height: 48px; margin-right: 2px; }
.studio .tool:disabled { color: #a3a3a3; }
.more { margin: 24px 6px 0 auto; }

.row { display: flex; gap: 3px; padding-bottom: 4px; background: #f0efee; }
.row:last-child { padding-bottom: 0; }
.panel { box-sizing: border-box; border: 1px solid #aaa6a1; border-radius: 4px 4px 0 0; background: #fff; display: flex; flex-direction: column; min-width: 0; }
.tabs { display: flex; height: 29px; background: #f1f0ee; border-bottom: 1px solid #aaa6a1; border-radius: 4px 4px 0 0; }
.tab { display: flex; align-items: center; gap: 4px; padding: 1px 0 0 4px; border-right: 1px solid #aaa6a1; }
.tab.active { background: linear-gradient(#f6f6f5, #fff); height: 30px; }
.close { margin-left: 4px; }
.window-tools { margin-left: auto; padding: 6px 4px 0 0; }
.bar { position: absolute; background: #f07746; }

.palette { width: 126px; height: 347px; }
.tab-palette { width: 75px; gap: 2px; }
.palette-body { position: relative; flex: 1; padding: 3px 5px 0; }
.category { padding-bottom: 4px; }
h3 { display: flex; align-items: center; height: 26px; gap: 2px; width: 114px; font-size: 14px; font-weight: 400; }
h3::before, h3::after { content: ""; flex: 1; height: 1px; background: #c4c4c4; }
.palette-row { display: flex; gap: 16px; height: 18px; align-items: center; padding-left: 3px; margin-bottom: 5px; }
.palette-row:last-child { margin-bottom: 0; }
.palette-bar { top: 2px; right: 2px; width: 3px; height: 170px; }

.editor { flex: 1; height: 347px; }
.tab-editor { width: 269px; }
.canvas { position: relative; margin-right: 2px; }
.diagram { overflow: hidden; font-family: "Noto Sans", sans-serif; font-size: 12px; }
.diagram text { fill: #000; }
.canvas-bar { right: 0; top: 2px; width: 3px; height: 271px; }
.canvas-tools { display: flex; gap: 3px; padding: 3px 0 4px 5px; margin: 0 2px; border-bottom: 1px solid #d5d5d5; }

.tree { flex: 381 1 0; height: 303px; }
.props { flex: 896 1 0; height: 303px; }
.tab-tree { width: 112px; gap: 2px; padding-left: 2px; }
.tab-overview { width: 88px; gap: 1px; padding-left: 3px; }
.tree-body { flex: 1; margin: 3px 1px 1px 2px; border: 1px solid #bdbab6; padding: 10px 7px 10px 6px; }
.filter { display: flex; align-items: center; height: 22px; border: 1px solid #aaa6a1; border-radius: 3px; padding: 0 4px 0 3px; box-shadow: 0 0 0 1px #eee; }
.filter input { flex: 1; min-width: 0; border: 0; padding: 0; outline: 0; background: none; }
.studio .filter input::placeholder { color: #bbb; }
.tree-root { display: flex; align-items: center; gap: 4px; margin-top: 8px; }

.tab-general { width: 78px; gap: 3px; }
.tab-application { width: 126px; }
.studio .tab-application { background: linear-gradient(#fbe6dc, #f2997a); color: #111; }
.tab-appearance { width: 107px; }
.tab-simulation { width: 99px; gap: 3px; }
.tab-validation { width: 140px; gap: 3px; }
.props-frame { flex: 1; border: 2px solid #f3a081; border-top-width: 3px; display: flex; flex-direction: column; }
h2 { display: flex; align-items: center; gap: 4px; height: 29px; padding-left: 4px; border-bottom: 1px solid #fbd3c5; background: linear-gradient(#fff 20%, #fdece6); font-size: 16px; line-height: 20px; color: #ee6d3c; }
.props-body { flex: 1; display: flex; }
.pages { box-sizing: border-box; width: 155px; padding-top: 8px; background: #f1f0ef; border-right: 1px solid #aaa; }
.page { display: block; width: 155px; height: 24px; padding-left: 7px; text-align: left; border-top: 2px solid #bbb9ae; border-bottom: 1px solid #b5b493; background: linear-gradient(#dfdeab, #cdcb9f); }
.page.current { position: relative; background: #fff; border-color: #fff; font-weight: 700; color: #333; }
.resources { flex: 1; min-width: 0; padding: 4px 24px 0 4px; }
h4 { display: flex; align-items: center; gap: 7px; height: 23px; padding-left: 8px; border: 1px solid #fbd3c5; border-bottom: 0; border-radius: 4px 4px 0 0; background: linear-gradient(#fdece6, #fff); font-size: 14px; color: #ee6d3c; }
.resource-row { position: relative; display: flex; margin-top: 17px; margin-right: -14px; }
.file-box { position: relative; box-sizing: border-box; width: 230px; height: 132px; border: 2px solid #bcbab8; overflow: hidden; }
.file-box ul { margin-top: -11px; }
.file-box li { display: flex; align-items: center; gap: 4px; height: 23px; white-space: nowrap; }
.level-0 { padding-left: 10px; }
.level-1 { padding-left: 21px; }
.level-2 { padding-left: 46px; }
.selected { background: #f07746; color: #fff; }
.file-vbar { right: 0; top: 17px; width: 3px; height: 40px; }
.file-hbar { left: 0; bottom: 0; width: 217px; height: 3px; }
.file-actions { display: flex; flex-direction: column; gap: 2px; width: 93px; margin: 1px 0 0 5px; }
.btn { height: 27px; border: 1px solid #bdbbb9; border-radius: 4px; background: linear-gradient(#fff, #f1f1f1); box-shadow: inset 0 -1px #e0e0e0; }
.studio .btn { color: #333; }
.studio .btn:disabled { color: #aaa; background: #e2e2e2; }
.marked { position: relative; background: linear-gradient(#dfdffd, #cfcff3); }
.marked::after { content: ""; position: absolute; inset: -4px -9px -3px -10px; border: 4px solid #3cfb00; }
.login { flex: 1; margin: 8px 0 0 11px; min-width: 0; }
.login label { display: block; margin-left: 3px; }
.login-row { display: flex; align-items: center; margin-top: 7px; gap: 7px; }
.login-row input { box-sizing: border-box; width: 81px; height: 25px; border: 1px solid #c6c4c2; }
.clear { width: 26px; display: flex; align-items: center; justify-content: center; margin-left: -2px; }
.browse { width: 71px; }
.small { width: 37px; }
.download { width: 140px; }
.pointer { position: absolute; left: -44px; top: 89px; }
</style>
